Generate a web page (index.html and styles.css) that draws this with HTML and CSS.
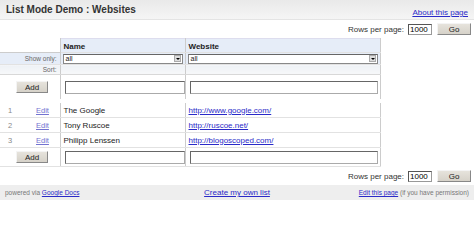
FILE: index.html
```html
<!DOCTYPE html>
<html lang="en">
<head>
  <meta charset="UTF-8">
  <title>List Mode Demo : Websites</title>
  <link rel="stylesheet" href="styles.css">
</head>
<body>

<div class="topbar">
  <h1>List Mode Demo : Websites</h1>
  <a href="#" class="about">About this page</a>
</div>

<div class="pager">
  <span>Rows per page:</span>
  <input class="rows" type="text" value="1000">
  <button class="btn go">Go</button>
</div>

<table class="list">
  <colgroup>
    <col class="c-left">
    <col class="c-name">
    <col class="c-site">
  </colgroup>
  <tr class="head">
    <td class="left"></td>
    <th>Name</th>
    <th>Website</th>
  </tr>
  <tr class="filter">
    <td class="left label">Show only:</td>
    <td><div class="select"><span>all</span><i class="arrow"></i></div></td>
    <td><div class="select"><span>all</span><i class="arrow"></i></div></td>
  </tr>
  <tr class="sort">
    <td class="left label">Sort:</td>
    <td></td>
    <td></td>
  </tr>
  <tr class="add">
    <td class="left"><button class="btn add-btn">Add</button></td>
    <td><input class="field" type="text"></td>
    <td><input class="field" type="text"></td>
  </tr>
  <tr class="row first">
    <td class="left"><span class="num">1</span><a href="#" class="edit">Edit</a></td>
    <td>The Google</td>
    <td><a href="#">http://www.google.com/</a></td>
  </tr>
  <tr class="row">
    <td class="left"><span class="num">2</span><a href="#" class="edit">Edit</a></td>
    <td>Tony Ruscoe</td>
    <td><a href="#">http://ruscoe.net/</a></td>
  </tr>
  <tr class="row">
    <td class="left"><span class="num">3</span><a href="#" class="edit">Edit</a></td>
    <td>Philipp Lenssen</td>
    <td><a href="#">http://blogoscoped.com/</a></td>
  </tr>
  <tr class="add last">
    <td class="left"><button class="btn add-btn">Add</button></td>
    <td><input class="field" type="text"></td>
    <td><input class="field" type="text"></td>
  </tr>
</table>

<div class="pager bottom">
  <span>Rows per page:</span>
  <input class="rows" type="text" value="1000">
  <button class="btn go">Go</button>
</div>

<div class="footer">
  <div class="powered">powered via <a href="#">Google Docs</a></div>
  <a href="#" class="create">Create my own list</a>
  <div class="perm"><a href="#">Edit this page</a> (if you have permission)</div>
</div>

</body>
</html>
```

FILE: styles.css
```css
body {
  margin: 0;
  font-family: "Liberation Sans", Arial, sans-serif;
  font-size: 8px;
  color: #222;
  background: #fff;
}

a {
  color: #2a2ac8;
}

.topbar {
  height: 19px;
  display: flex;
  align-items: center;
  justify-content: space-between;
  padding: 0 6px;
  background: linear-gradient(#e9e9e9, #f5f5f5);
  border-bottom: 1px solid #e4e4e4;
}

h1 {
  margin: 0;
  font-size: 10px;
  font-weight: bold;
  color: #333;
}

.about {
  font-size: 8px;
  padding-top: 6px;
}

.pager {
  height: 18px;
  display: flex;
  align-items: center;
  justify-content: flex-end;
  padding-right: 3px;
  color: #333;
}

.rows {
  width: 24px;
  height: 11px;
  box-sizing: border-box;
  margin: 0 5px 0 4px;
  padding: 0 1px;
  font: 8px "Liberation Sans", Arial, sans-serif;
  border: 1px solid #999;
  border-top-color: #555;
  border-left-color: #555;
}

.btn {
  height: 12px;
  box-sizing: border-box;
  padding: 0;
  font: 8px "Liberation Sans", Arial, sans-serif;
  color: #222;
  background: linear-gradient(#e6e3dc, #d6d2c9);
  border: 1px solid #aaa;
  border-top-color: #f4f4f4;
  border-left-color: #f4f4f4;
  border-bottom-color: #888;
  border-right-color: #888;
}

.go {
  width: 34px;
}

.list {
  width: 380px;
  border-collapse: collapse;
  table-layout: fixed;
}

.c-left { width: 60px; }
.c-name { width: 125px; }
.c-site { width: 195px; }

.list td,
.list th {
  padding: 0 2px;
  border-left: 1px solid #ccc;
  border-right: 1px solid #ccc;
  border-bottom: 1px solid #e2e2e2;
  text-align: left;
  white-space: nowrap;
  line-height: 9px;
}

.list td.left {
  border-left: none;
}

.head th {
  height: 12px;
  padding: 0 3px 1px;
  vertical-align: bottom;
  font-weight: bold;
  background: #e6edf8;
  border-top: 1px solid #dde;
}

.head td {
  border-bottom-color: #ccc;
}

.filter td {
  height: 11px;
  background: #e6edf8;
}

.label {
  font-size: 6.5px;
  color: #666;
  text-align: right !important;
  padding-right: 3px !important;
}

.select {
  width: 100%;
  height: 10px;
  box-sizing: border-box;
  display: flex;
  align-items: center;
  justify-content: space-between;
  background: #fff;
  border: 1px solid #888;
  border-top-color: #666;
  font-size: 7px;
  padding-left: 2px;
}

.arrow {
  width: 7px;
  height: 7px;
  margin-right: 1px;
  background: #ddd;
  border: 1px solid #aaa;
  box-sizing: border-box;
  position: relative;
}

.arrow::after {
  content: "";
  position: absolute;
  left: 1px;
  top: 2px;
  border-left: 2px solid transparent;
  border-right: 2px solid transparent;
  border-top: 2px solid #000;
}

.sort td {
  height: 9px;
  background: linear-gradient(#eef1f5, #f7f8fa);
  border-bottom-color: #d8d8d8;
}

.sort .label {
  vertical-align: bottom;
}

.add td {
  height: 24px;
}

.add.last td {
  height: 18px;
}

.add td.left {
  padding-left: 16px;
}

.add-btn {
  width: 32px;
  height: 12px;
}

.field {
  width: 100%;
  height: 13px;
  box-sizing: border-box;
  margin: 0 0 0 2px;
  border: 1px solid #aaa;
  border-top-color: #666;
  border-left-color: #666;
}

.list td:last-child .field {
  width: calc(100% - 2px);
}

.row td {
  height: 14px;
  font-size: 8px;
  padding-left: 3px;
}

.row.first td {
  border-top: 4px solid #fff;
}

.num {
  display: inline-block;
  width: 28px;
  padding-left: 5px;
  color: #888;
  font-size: 7.5px;
}

.edit {
  color: #7373d0;
  font-size: 7.5px;
}

.footer {
  height: 15px;
  display: flex;
  align-items: center;
  justify-content: space-between;
  padding: 0 5px;
  background: #eeeeee;
}

.powered,
.perm {
  font-size: 6.5px;
  color: #777;
  width: 150px;
}

.perm {
  text-align: right;
}

.create {
  font-size: 8px;
}
```
